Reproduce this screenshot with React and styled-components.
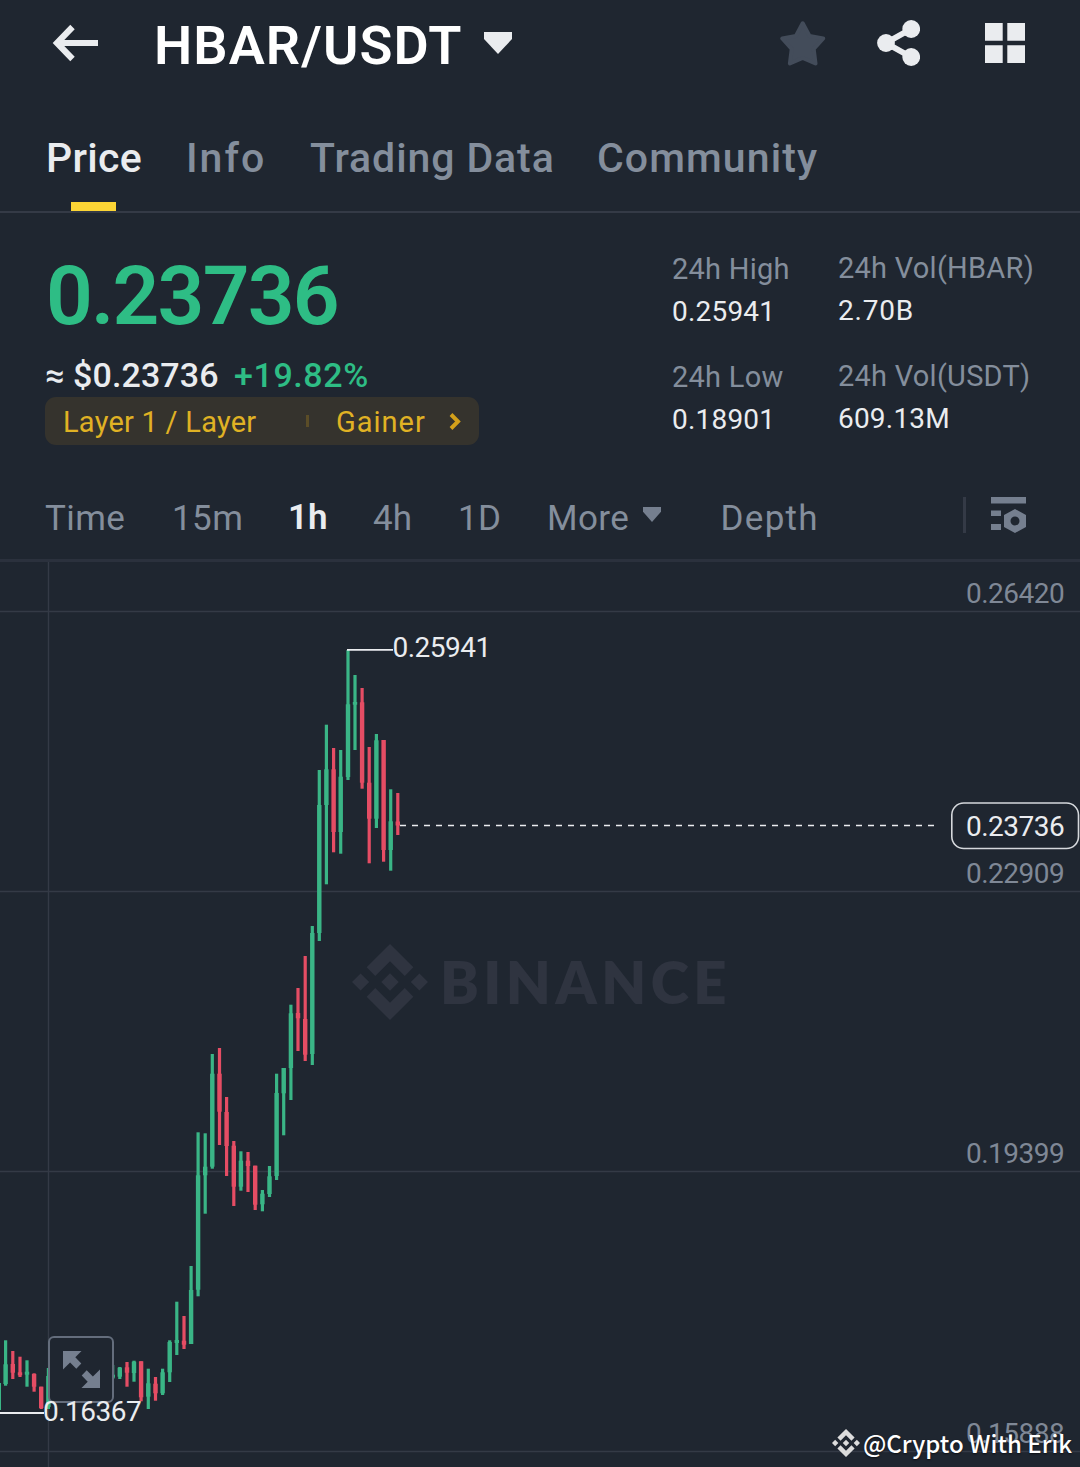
import React from "react";
import styled, { createGlobalStyle } from "styled-components";

const c = {
  bg: "#1f2630",
  text: "#eaecef",
  muted: "#848e9c",
  icon: "#757f8f",
  line: "#343a46",
  green: "#2ebd85",
  candleUp: "#3ab586",
  candleDown: "#e54d64",
  gold: "#e0b224",
};

const Global = createGlobalStyle`
  * { box-sizing: border-box; }
  body { margin: 0; background: ${c.bg}; font-family: Roboto, "Liberation Sans", sans-serif; }
  svg { display: block; flex: none; }
`;

const Screen = styled.main`
  width: 1080px;
  height: 1467px;
  overflow: hidden;
  background: ${c.bg};
  color: ${c.text};
`;

const Header = styled.header`
  display: flex;
  align-items: center;
  height: 86px;
  padding: 0 55px 0 52px;
`;

const Title = styled.h1`
  width: 330px;
  margin: 0 0 0 56px;
  padding-top: 5px;
  font-size: 54px;
  line-height: 64px;
  font-weight: 600;
  letter-spacing: 1.1px;
  color: #fff;
  white-space: nowrap;
`;

const Actions = styled.div`
  display: flex;
  align-items: center;
  margin-left: auto;
  & > :nth-child(2) { margin-left: 51px; }
  & > :nth-child(3) { margin-left: 65px; }
`;

const Tabs = styled.nav`
  display: grid;
  grid-template-columns: 140px 124px 287px auto;
  height: 127px;
  padding: 47px 0 0 46px;
  border-bottom: 2px solid ${c.line};
`;

const Tab = styled.div`
  width: max-content;
  font-size: 41px;
  line-height: 50px;
  font-weight: 500;
  letter-spacing: ${(p) => p.$track}px;
  color: ${(p) => (p.$active ? c.text : c.muted)};
  white-space: nowrap;
`;

const Marker = styled.div`
  width: 45px;
  height: 9px;
  margin: 19px 0 0 25px;
  background: #fcd535;
`;

const Summary = styled.section`
  display: grid;
  grid-template-columns: 627px 166px auto;
  height: 264px;
  padding-left: 45px;
`;

const Quote = styled.div`
  padding-top: 38px;
`;

const LastPrice = styled.div`
  padding-left: 1px;
  font-size: 82px;
  line-height: 90px;
  font-weight: 600;
  letter-spacing: -1.8px;
  color: ${c.green};
`;

const SubPrice = styled.div`
  display: flex;
  margin-top: 14px;
  font-size: 34px;
  line-height: 40px;
  font-weight: 500;
`;

const Fiat = styled.span`
  width: 189px;
  letter-spacing: 0.1px;
  white-space: nowrap;
`;

const Change = styled.span`
  letter-spacing: 0.6px;
  color: ${c.green};
`;

const Tags = styled.div`
  display: flex;
  align-items: center;
  width: 434px;
  height: 48px;
  margin-top: 2px;
  padding-left: 18px;
  border-radius: 11px;
  background: #35332d;
  color: ${c.gold};
  font-size: 29px;
`;

const TagText = styled.span`
  width: ${(p) => p.$width}px;
  padding-top: 2px;
  letter-spacing: ${(p) => p.$track}px;
  white-space: nowrap;
`;

const TagDivider = styled.i`
  width: 3px;
  height: 12px;
  margin-right: 27px;
  background: #5b4d27;
`;

const StatColumn = styled.dl`
  margin: 0;
  padding-top: ${(p) => p.$top}px;
`;

const StatLabel = styled.dt`
  font-size: 29px;
  line-height: 42px;
  letter-spacing: 0.25px;
  color: ${c.muted};
  white-space: nowrap;
`;

const StatValue = styled.dd`
  margin: 0 0 24px;
  font-size: 28px;
  line-height: 43px;
  height: 42px;
  letter-spacing: ${(p) => p.$track ?? 0.2}px;
  color: ${c.text};
`;

const Intervals = styled.nav`
  display: flex;
  align-items: center;
  height: 85px;
  padding: 0 54px 0 45px;
  border-bottom: 3px solid #2b313d;
`;

const Interval = styled.div`
  display: flex;
  align-items: center;
  width: ${(p) => p.$width}px;
  padding-top: ${(p) => (p.$active ? 0 : 2)}px;
  font-size: 35px;
  line-height: 42px;
  font-weight: ${(p) => (p.$active ? 600 : 400)};
  letter-spacing: ${(p) => p.$track ?? 0.4}px;
  color: ${(p) => (p.$active ? c.text : c.muted)};
`;

const MoreLabel = styled.span`
  width: 96px;
`;

const CaretSlot = styled.span`
  padding-bottom: 10px;
`;

const Tools = styled.div`
  display: flex;
  align-items: center;
  gap: 25px;
  margin-left: auto;
  padding-bottom: 7px;
`;

const ToolDivider = styled.i`
  width: 3px;
  height: 36px;
  background: #343a46;
`;

const Chart = styled.section`
  position: relative;
  height: 905px;
  overflow: hidden;
`;

const Plot = styled.svg`
  font-family: Roboto, "Liberation Sans", sans-serif;
  font-size: 28px;
`;

const Brand = styled.div`
  position: absolute;
  left: 352px;
  top: 382px;
  display: flex;
  align-items: center;
  gap: 12px;
  color: #2f3440;
  font: 800 58px/74px Lato, sans-serif;
  letter-spacing: 4.5px;
`;

const Expand = styled.button`
  position: absolute;
  left: 48px;
  top: 774px;
  display: grid;
  place-items: center;
  width: 66px;
  height: 67px;
  padding: 0;
  border: 2px solid #646d7c;
  border-radius: 6px;
  background: ${c.bg};
`;

const LowLabel = styled.span`
  position: absolute;
  left: 43px;
  top: 830px;
  font-size: 28px;
  line-height: 40px;
  letter-spacing: -0.5px;
`;

const Credit = styled.div`
  position: absolute;
  left: 832px;
  top: 861px;
  display: flex;
  align-items: center;
  gap: 3px;
  height: 40px;
  color: #fff;
  font: 500 24px/38px "Noto Sans CJK SC", "Noto Sans", sans-serif;
  white-space: nowrap;
  text-shadow: 0 1px 2px rgba(0, 0, 0, 0.6);
`;

const BinanceMark = ({ size, color }) => (
  <svg width={size} height={size} viewBox="0 0 126.6 126.6" fill={color}>
    <path d="M38.73 53.2 63.32 28.62l24.6 24.6 14.3-14.31L63.32 0l-38.9 38.9zM0 63.31 14.3 49l14.31 14.31-14.31 14.3zM38.73 73.41 63.32 98l24.6-24.6 14.31 14.29-38.91 38.91-38.9-38.88zM98 63.31 112.3 49l14.31 14.3-14.31 14.32zM77.83 63.3 63.32 48.78 48.81 63.28l14.51 14.51z" />
  </svg>
);

const Back = () => (
  <svg width="46" height="40" viewBox="0 0 46 40" fill="none" stroke={c.text} strokeWidth="6.2">
    <path d="M20.500 4 5 20l15.500 16M5 20h41" />
  </svg>
);

const Caret = ({ width, height, color }) => (
  <svg width={width} height={height} viewBox="0 0 28 22" preserveAspectRatio="none" fill={color}>
    <path d="M0 0h28v7L14 22 0 7z" />
  </svg>
);

const Star = () => (
  <svg width="46" height="46" viewBox="0 0 46 46" fill="#434c5a" stroke="#434c5a" strokeWidth="4" strokeLinejoin="round">
    <path d="M22.700 3.300 29.500 16 43.200 18.500 33.700 29 35.500 43.500 22.700 38 9.900 43.500 11.700 29 2.300 18.500 15.900 16z" />
  </svg>
);

const Share = () => (
  <svg width="43" height="46" viewBox="0 0 43 46" fill={c.text}>
    <path d="M34 9 9 23l25 14" fill="none" stroke={c.text} strokeWidth="6" />
    <circle cx="9" cy="23" r="8.900" />
    <circle cx="34.200" cy="9" r="8.900" />
    <circle cx="34.200" cy="37" r="8.900" />
  </svg>
);

const Apps = () => (
  <svg width="40" height="40" viewBox="0 0 40 40" fill={c.text}>
    <path d="M0 0h17.700v17.700H0zM22.300 0H40v17.700H22.300zM0 22.300h17.700V40H0zM22.300 22.300H40V40H22.300z" />
  </svg>
);

const Chevron = () => (
  <svg width="13" height="17" viewBox="0 0 13 17" fill="none" stroke="#d3a01a" strokeWidth="3.900">
    <path d="M2 1.500 9 8.500 2 15.500" />
  </svg>
);

const ChartSettings = () => (
  <svg width="35" height="36" viewBox="0 0 35 36" fill={c.icon}>
    <path d="M0 0h35v6.500H0zM0 13.500h10v5.500H0zM0 27h10v6H0z" />
    <path fillRule="evenodd" d="M24 12l11 6v12l-11 6-11-6V18zM24 19.500a4.500 4.500 0 1 0 0 9 4.500 4.500 0 0 0 0-9z" />
  </svg>
);

const ExpandArrows = () => (
  <svg width="37" height="37" viewBox="0 0 37 37" fill={c.icon}>
    <path d="M0 0h18.500L12.300 6.300 18.300 12.500 13.300 17.700 7.100 11.500 0 18.500z" />
    <path d="M37 37H18.500l6.200-6.300-6-6.200 5-5.200 6.200 6.200L37 18.500z" />
  </svg>
);

// [x, high, low, bodyTop, bodyBottom, rising]
const candles = [
  [-1.2, 1383, 1410, 1383, 1410, 1],
  [5.6, 1340.3, 1385.7, 1364.3, 1384, 1],
  [12.8, 1351, 1379, 1364, 1372.7, 0],
  [20, 1356.7, 1377, 1372.3, 1375.3, 0],
  [27, 1360.3, 1386.7, 1371.7, 1374.7, 1],
  [34.1, 1373.3, 1391.7, 1374, 1386.7, 0],
  [41.2, 1386.7, 1409, 1386.7, 1408, 0],
  [48.4, 1368, 1409, 1376, 1407, 1],
  [112.7, 1365, 1379, 1374.7, 1377.7, 1],
  [119.8, 1367, 1379, 1367.7, 1376.7, 1],
  [127, 1362, 1386.7, 1367.3, 1372.7, 0],
  [134, 1360.7, 1381.7, 1361.7, 1373, 1],
  [141.1, 1361.3, 1401.3, 1361.3, 1397.3, 0],
  [148.3, 1368.7, 1409, 1383.3, 1396.7, 1],
  [155.5, 1377, 1400.7, 1383.7, 1393.3, 0],
  [162.6, 1368.7, 1395, 1372.3, 1393.3, 1],
  [169.7, 1340.3, 1382, 1342, 1372.3, 1],
  [176.8, 1301.7, 1355, 1340, 1343, 1],
  [184, 1316, 1349, 1340.7, 1344.7, 0],
  [191.1, 1266, 1344, 1290, 1344, 1],
  [198.1, 1132.3, 1296.3, 1175.3, 1289.7, 1],
  [205.2, 1133.3, 1213.7, 1166.7, 1175.3, 1],
  [212.3, 1054, 1168.7, 1073.7, 1166.7, 1],
  [219.5, 1048, 1145, 1073.7, 1111.7, 0],
  [226.6, 1097, 1176, 1112, 1146, 0],
  [233.8, 1141, 1206, 1145.7, 1186.7, 0],
  [240.9, 1151.3, 1190.7, 1160.7, 1186.7, 1],
  [248, 1152, 1192, 1160.7, 1166, 0],
  [255.2, 1165.7, 1210, 1165.7, 1204.7, 0],
  [262.4, 1190, 1211.3, 1193.7, 1204.3, 1],
  [269.5, 1166, 1197, 1176.3, 1194, 1],
  [276.6, 1073.7, 1180, 1093, 1176, 1],
  [283.7, 1068, 1135.3, 1068, 1093.3, 1],
  [290.9, 1004.7, 1100, 1013.3, 1068, 1],
  [298, 988, 1051, 1013, 1018.3, 0],
  [305.2, 956, 1061, 1019, 1054.7, 0],
  [312.3, 926, 1065, 933, 1054, 1],
  [319.3, 770, 941, 805, 933, 1],
  [326.4, 724.7, 884.3, 769.3, 805, 1],
  [333.6, 748, 852.3, 769.3, 832, 0],
  [340.7, 750, 853.7, 776.7, 832, 1],
  [348, 650, 780, 704.3, 777, 1],
  [355, 675, 750, 702, 704.7, 1],
  [362.1, 688, 788.7, 702.3, 782.7, 0],
  [369.2, 747, 863.3, 782.7, 818.7, 0],
  [376.4, 734, 828, 740.3, 818.7, 1],
  [383.6, 740, 861.7, 740, 850, 0],
  [390.7, 789.3, 870.7, 821.3, 850, 1],
  [397.8, 793, 835, 821.5, 825.5, 0],
];

const levels = [
  [611.5, "0.26420"],
  [891.5, "0.22909"],
  [1171.5, "0.19399"],
  [1451.5, "0.15888"],
];

const PriceGrid = () => (
  <g>
    {levels.map(([y, label]) => (
      <g key={label}>
        <path d={`M0 ${y}H1080`} stroke={c.line} strokeWidth="1.400" />
        <text x="966" y={y - 8.8} fill="#7f8896" letterSpacing="-0.500">{label}</text>
      </g>
    ))}
    <path d="M48.500 562V1467" stroke={c.line} strokeWidth="1.400" />
  </g>
);

const Candles = () => (
  <g>
    {candles.map(([x, high, low, top, bottom, up]) => (
      <g key={x} fill={up ? c.candleUp : c.candleDown}>
        <rect x={x - 1.6} y={high} width="3.200" height={low - high} />
        <rect x={x - 2.2} y={top} width="4.400" height={bottom - top} />
      </g>
    ))}
  </g>
);

export default function App() {
  return (
    <Screen>
      <Global />
      <Header>
        <Back />
        <Title>HBAR/USDT</Title>
        <Caret width={28} height={22} color={c.text} />
        <Actions>
          <Star />
          <Share />
          <Apps />
        </Actions>
      </Header>

      <Tabs>
        <Tab $active $track={0.3}>Price<Marker /></Tab>
        <Tab $track={2}>Info</Tab>
        <Tab $track={0.9}>Trading Data</Tab>
        <Tab $track={1.1}>Community</Tab>
      </Tabs>

      <Summary>
        <Quote>
          <LastPrice>0.23736</LastPrice>
          <SubPrice>
            <Fiat>≈ $0.23736</Fiat>
            <Change>+19.82%</Change>
          </SubPrice>
          <Tags>
            <TagText $width={243} $track={0.25}>Layer 1 / Layer</TagText>
            <TagDivider />
            <TagText $width={113} $track={1}>Gainer</TagText>
            <Chevron />
          </Tags>
        </Quote>
        <StatColumn $top={35}>
          <StatLabel>24h High</StatLabel>
          <StatValue>0.25941</StatValue>
          <StatLabel>24h Low</StatLabel>
          <StatValue>0.18901</StatValue>
        </StatColumn>
        <StatColumn $top={34}>
          <StatLabel>24h Vol(HBAR)</StatLabel>
          <StatValue $track={0.8}>2.70B</StatValue>
          <StatLabel>24h Vol(USDT)</StatLabel>
          <StatValue>609.13M</StatValue>
        </StatColumn>
      </Summary>

      <Intervals>
        <Interval $width={127}>Time</Interval>
        <Interval $width={116}>15m</Interval>
        <Interval $width={85} $active $track={0}>1h</Interval>
        <Interval $width={85} $track={0}>4h</Interval>
        <Interval $width={89}>1D</Interval>
        <Interval $width={173.5}>
          <MoreLabel>More</MoreLabel>
          <CaretSlot><Caret width={18} height={15} color={c.icon} /></CaretSlot>
        </Interval>
        <Interval $width={110} $track={1.3}>Depth</Interval>
        <Tools>
          <ToolDivider />
          <ChartSettings />
        </Tools>
      </Intervals>

      <Chart>
        <Brand>
          <BinanceMark size={76} color="#2f3440" />
          BINANCE
        </Brand>
        <Plot width="1080" height="905" viewBox="0 562 1080 905">
          <PriceGrid />
          <Candles />
          <path d="M347 649.800H393M0 1413H44" stroke={c.text} strokeWidth="1.800" />
          <text x="392.500" y="657" fill={c.text} letterSpacing="-0.500">0.25941</text>
          <path d="M400 825.500H935" stroke={c.text} strokeWidth="1.600" strokeDasharray="6 6" />
          <rect x="951.800" y="803" width="126.700" height="45.500" rx="12" fill={c.bg} stroke="#d5d8dc" strokeWidth="1.600" />
          <text x="966" y="836" fill={c.text} letterSpacing="-0.500">0.23736</text>
        </Plot>
        <Expand aria-label="Expand chart"><ExpandArrows /></Expand>
        <LowLabel>0.16367</LowLabel>
        <Credit>
          <BinanceMark size={28} color="#dcdcdc" />
          @Crypto With Erik
        </Credit>
      </Chart>
    </Screen>
  );
}
